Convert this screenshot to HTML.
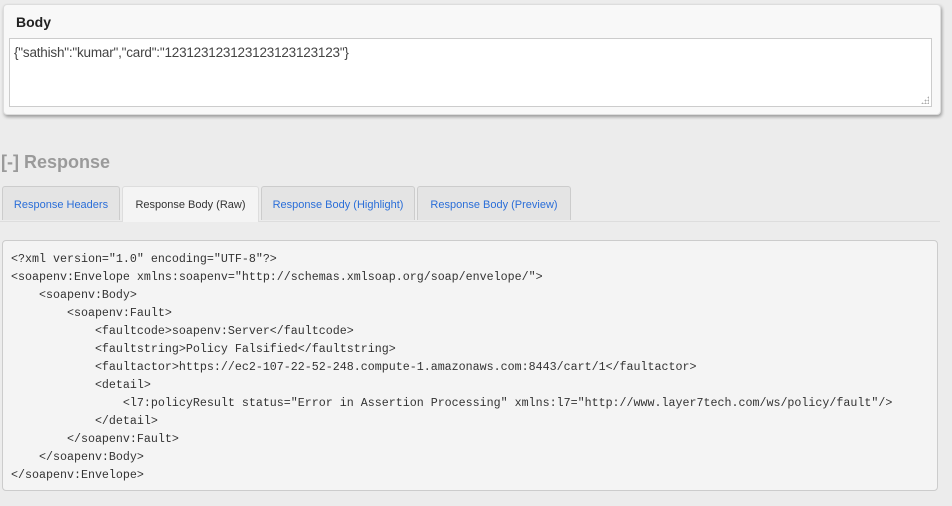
<!DOCTYPE html>
<html><head><style>
body{margin:0;background:#ececec;width:952px;height:506px;overflow:hidden;font-family:"Liberation Sans",Arial,sans-serif;position:relative}
.panel{position:absolute;left:3px;top:4px;width:936px;height:109px;background:#f8f8f8;border:1px solid #ddd;border-radius:4px;box-shadow:1px 2px 3px rgba(0,0,0,.35)}
.panel h3{margin:0;position:absolute;left:12px;top:9px;font-size:14px;font-weight:bold;color:#222}
.ta{position:absolute;left:5px;top:33px;width:921px;height:67px;background:#fff;border:1px solid #ccc;font-size:13.5px;color:#444;padding:0}
.ta span{position:absolute;left:4px;top:6px;letter-spacing:-0.2px}
.grip{position:absolute;right:2px;bottom:2px;width:8px;height:8px;background:
radial-gradient(circle,#aaa 0.8px,transparent 1px) 0 0/3px 3px;clip-path:polygon(100% 0,100% 100%,0 100%)}
.resp{position:absolute;left:1px;top:152px;font-size:18px;font-weight:bold;color:#9a9a9a}
.tabs{position:absolute;left:0;top:186px;width:940px;height:35px;border-bottom:1px solid #ddd}
.tab{position:absolute;top:0;height:34px;box-sizing:border-box;border:1px solid #ccc;border-bottom:none;border-radius:3px 3px 0 0;background:#e4e4e4;font-size:11px;color:#2a6ed8;line-height:36px;text-align:center}
.tab.act{background:#f4f4f4;color:#333;height:36px;border-color:#ddd}
pre{position:absolute;left:2px;top:240px;width:936px;height:251px;margin:0;box-sizing:border-box;background:#f4f4f4;border:1px solid #ccc;border-radius:4px;font-family:"Liberation Mono",monospace;font-size:11.67px;line-height:18px;color:#333;padding:9px 0 0 8px}
</style></head><body>
<div class="panel"><h3>Body</h3><div class="ta"><span>{"sathish":"kumar","card":"123123123123123123123123"}</span><div class="grip"></div></div></div>
<div class="resp">[-] Response</div>
<div class="tabs">
<div class="tab" style="left:2px;width:118px">Response Headers</div>
<div class="tab act" style="left:122px;width:137px">Response Body (Raw)</div>
<div class="tab" style="left:261px;width:154px">Response Body (Highlight)</div>
<div class="tab" style="left:417px;width:154px">Response Body (Preview)</div>
</div>
<pre>&lt;?xml version="1.0" encoding="UTF-8"?&gt;
&lt;soapenv:Envelope xmlns:soapenv="http://schemas.xmlsoap.org/soap/envelope/"&gt;
    &lt;soapenv:Body&gt;
        &lt;soapenv:Fault&gt;
            &lt;faultcode&gt;soapenv:Server&lt;/faultcode&gt;
            &lt;faultstring&gt;Policy Falsified&lt;/faultstring&gt;
            &lt;faultactor&gt;https://ec2-107-22-52-248.compute-1.amazonaws.com:8443/cart/1&lt;/faultactor&gt;
            &lt;detail&gt;
                &lt;l7:policyResult status="Error in Assertion Processing" xmlns:l7="http://www.layer7tech.com/ws/policy/fault"/&gt;
            &lt;/detail&gt;
        &lt;/soapenv:Fault&gt;
    &lt;/soapenv:Body&gt;
&lt;/soapenv:Envelope&gt;</pre>
</body></html>
